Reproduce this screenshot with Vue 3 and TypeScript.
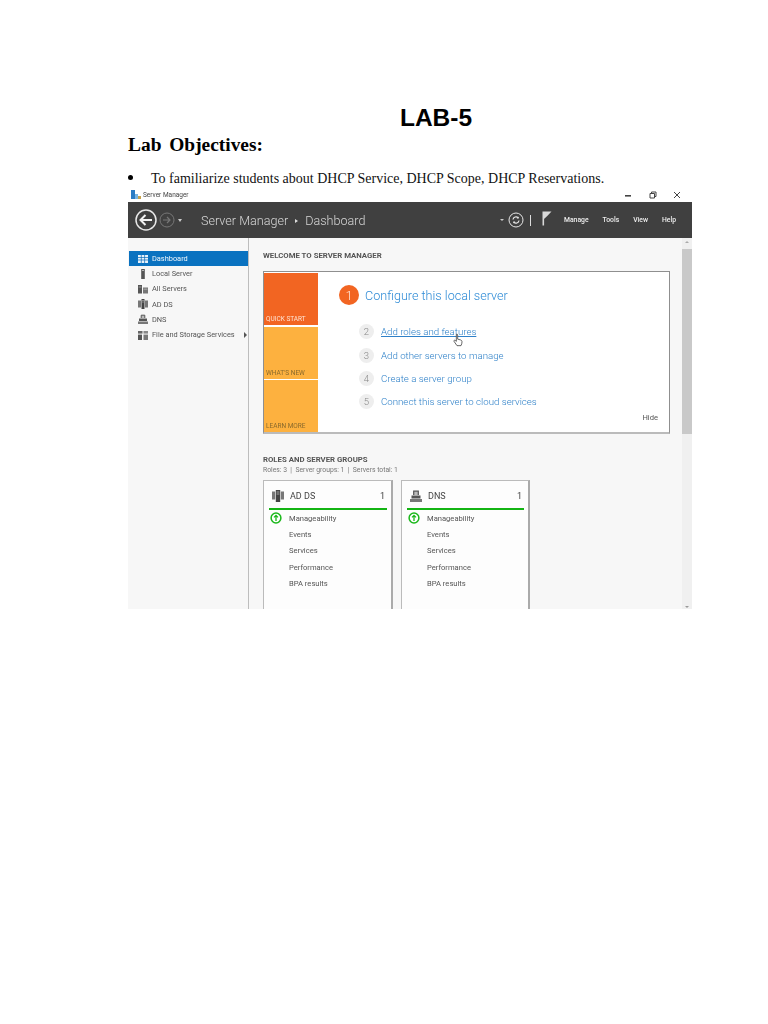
<script setup lang="ts">
const navItems = [
  { label: 'Dashboard', icon: 'dash', active: true },
  { label: 'Local Server', icon: 'local', active: false },
  { label: 'All Servers', icon: 'all', active: false },
  { label: 'AD DS', icon: 'ad', active: false },
  { label: 'DNS', icon: 'dns', active: false },
  { label: 'File and Storage Services', icon: 'file', active: false },
]
const steps = [
  { n: 2, label: 'Add roles and features', link: true },
  { n: 3, label: 'Add other servers to manage', link: false },
  { n: 4, label: 'Create a server group', link: false },
  { n: 5, label: 'Connect this server to cloud services', link: false },
]
const cards = [
  { name: 'AD DS', icon: 'ad' },
  { name: 'DNS', icon: 'dns' },
]
const rows = ['Events', 'Services', 'Performance', 'BPA results']
</script>

<template>
  <div class="page">
    <h1 class="title">LAB-5</h1>
    <h2 class="heading">Lab Objectives:</h2>
    <div class="bullet-row">
      <span class="bullet"></span>
      <span>To familiarize students about DHCP Service, DHCP Scope, DHCP Reservations.</span>
    </div>

    <div class="window">
      <div class="titlebar">
        <div class="titlebar-left">
          <svg class="app-icon" viewBox="0 0 10 10" width="10" height="10">
            <rect x="0" y="0" width="4" height="9" fill="#2b7cc4" />
            <rect x="4" y="4" width="3" height="5" fill="#7ab4e0" />
            <rect x="7" y="6" width="3" height="3" fill="#c8a24a" />
          </svg>
          <span>Server Manager</span>
        </div>
        <div class="win-controls">
          <svg viewBox="0 0 10 10" width="10" height="10"><rect x="1" y="5" width="6" height="1.6" fill="#444" /></svg>
          <svg viewBox="0 0 10 10" width="10" height="10"><path d="M2 3.5h4.5V8H2zM3.5 3.5V2H8v4.5H6.5" fill="none" stroke="#444" stroke-width="1" /></svg>
          <svg viewBox="0 0 10 10" width="10" height="10"><path d="M2 2l6 6M8 2l-6 6" stroke="#444" stroke-width="1" /></svg>
        </div>
      </div>

      <div class="topbar">
        <svg class="nav-back" viewBox="0 0 24 24" width="24" height="24">
          <circle cx="12" cy="12" r="10" fill="none" stroke="#e8e8e8" stroke-width="1.5" />
          <path d="M18 12H7M11.5 7L6.5 12l5 5" fill="none" stroke="#f2f2f2" stroke-width="2" />
        </svg>
        <svg class="nav-fwd" viewBox="0 0 16 16" width="16" height="16">
          <circle cx="8" cy="8" r="7" fill="none" stroke="#777" stroke-width="1" />
          <path d="M4 8h7M8 5l3 3-3 3" fill="none" stroke="#777" stroke-width="1.2" />
        </svg>
        <span class="caret-down"></span>
        <div class="crumb">Server Manager<span class="crumb-sep"></span>Dashboard</div>
        <div class="top-right">
          <span class="caret-small"></span>
          <svg class="refresh" viewBox="0 0 16 16" width="16" height="16">
            <circle cx="8" cy="8" r="7" fill="none" stroke="#e6e6e6" stroke-width="1" />
            <path d="M5 7.5a3 3 0 0 1 5.2-1.6M11 8.5a3 3 0 0 1-5.2 1.6" fill="none" stroke="#e6e6e6" stroke-width="1.2" />
            <path d="M10.8 4.4v2.2H8.7M5.2 11.6V9.4h2.1" fill="#e6e6e6" />
          </svg>
          <span class="pipe"></span>
          <svg class="flag" viewBox="0 0 10 15" width="10" height="15">
            <path d="M0.5 0.5h1.6v14H0.5zM2 0.5h7.5L5.5 4.8 2 8z" fill="#d8d8d8" />
          </svg>
          <nav class="menu">
            <span>Manage</span><span>Tools</span><span>View</span><span>Help</span>
          </nav>
        </div>
      </div>

      <div class="body">
        <aside class="sidebar">
          <div v-for="item in navItems" :key="item.label" class="nav-item" :class="{ active: item.active }">
            <svg class="nav-icon" viewBox="0 0 10 10" width="10" height="10">
              <template v-if="item.icon === 'dash'">
                <rect x="0" y="1" width="10" height="8" fill="#e8f2fa" />
                <path d="M0 3.5h10M0 6h10M3.3 1v8M6.6 1v8" stroke="#0a6cb8" stroke-width=".7" />
              </template>
              <template v-else-if="item.icon === 'local'">
                <rect x="3.2" y="0" width="3.6" height="10" fill="#555" />
                <rect x="4" y="1.2" width="2" height=".8" fill="#ccc" />
              </template>
              <template v-else-if="item.icon === 'all'">
                <rect x="0" y="1" width="4" height="8.5" fill="#555" />
                <rect x="5" y="3.5" width="5" height="6" fill="#777" />
                <path d="M0.6 3h2.8M5.6 5.2h3.8" stroke="#ccc" stroke-width=".6" />
              </template>
              <template v-else-if="item.icon === 'ad'">
                <rect x="0" y="1.5" width="3" height="7" fill="#777" />
                <rect x="3.5" y="0" width="3" height="10" fill="#444" />
                <rect x="7" y="1.5" width="3" height="7" fill="#777" />
                <path d="M4 1.5h2M4 3h2" stroke="#ccc" stroke-width=".5" />
              </template>
              <template v-else-if="item.icon === 'dns'">
                <path d="M3.2 4V1.2h3.6V4" fill="#bbb" stroke="#555" stroke-width="1" />
                <rect x="1" y="4.5" width="8" height="2.5" fill="#555" />
                <rect x="0" y="7.5" width="10" height="2.5" fill="#777" />
              </template>
              <template v-else>
                <rect x="0" y="1" width="4.5" height="2.6" fill="#666" />
                <rect x="5.5" y="1" width="4.5" height="2.6" fill="#888" />
                <rect x="0" y="4.6" width="4" height="5.4" fill="#555" />
                <rect x="5.5" y="4.6" width="4.5" height="5.4" fill="#777" />
              </template>
            </svg>
            <span>{{ item.label }}</span>
            <span v-if="item.icon === 'file'" class="caret-right"></span>
          </div>
        </aside>

        <main class="content">
          <div class="section-title welcome-title">WELCOME TO SERVER MANAGER</div>
          <section class="welcome">
            <div class="tiles">
              <div class="tile orange">QUICK START</div>
              <div class="tile yellow">WHAT'S NEW</div>
              <div class="tile yellow">LEARN MORE</div>
            </div>
            <div class="welcome-main">
              <div class="configure">
                <span class="num-circle">1</span>
                <span>Configure this local server</span>
              </div>
              <div v-for="s in steps" :key="s.n" class="step">
                <span class="step-num">{{ s.n }}</span>
                <span class="step-label" :class="{ link: s.link }">{{ s.label }}</span>
                <svg v-if="s.link" class="hand" viewBox="0 0 12 16" width="10" height="14">
                  <path d="M4 1.2c.8-.6 1.6 0 1.6.8v5l3.2.8c1.4.4 2 1.2 2 2.4 0 1.6-.5 3-1.2 4.6H4.8L1.2 9.6c-.5-.9.5-1.7 1.4-1.1L4 9.6V2c0-.3 0-.6 0-.8z" fill="#fff" stroke="#333" stroke-width=".9" />
                </svg>
              </div>
              <div class="hide">Hide</div>
            </div>
          </section>

          <div class="section-title roles-title">ROLES AND SERVER GROUPS</div>
          <div class="roles-sub">Roles: 3 &nbsp;|&nbsp; Server groups: 1 &nbsp;|&nbsp; Servers total: 1</div>

          <div class="cards">
            <article v-for="c in cards" :key="c.name" class="card">
              <header class="card-head">
                <svg class="card-icon" viewBox="0 0 12 12" width="12" height="12">
                  <template v-if="c.icon === 'ad'">
                    <rect x="0" y="1.5" width="3.2" height="8" fill="#777" />
                    <rect x="3.8" y="0" width="4.4" height="12" fill="#444" />
                    <rect x="8.8" y="1.5" width="3.2" height="8" fill="#777" />
                    <path d="M4.6 2h2.8M4.6 4h2.8" stroke="#ccc" stroke-width=".7" />
                  </template>
                  <template v-else>
                    <path d="M3.7 5V1.2h4.6V5" fill="#bbb" stroke="#555" stroke-width="1.2" />
                    <rect x="1.5" y="5.5" width="9" height="3" fill="#555" />
                    <rect x="0" y="9" width="12" height="3" fill="#777" />
                  </template>
                </svg>
                <span class="card-name">{{ c.name }}</span>
                <span class="card-count">1</span>
              </header>
              <div class="card-rule"></div>
              <div class="card-row first">
                <svg class="status" viewBox="0 0 12 12" width="12" height="12">
                  <circle cx="6" cy="6" r="4.9" fill="#fff" stroke="#1bb81b" stroke-width="1.5" />
                  <path d="M6 9V3.6M4 5.4L6 3.4l2 2" fill="none" stroke="#1bb81b" stroke-width="1.3" />
                </svg>
                <span>Manageability</span>
              </div>
              <div v-for="r in rows" :key="r" class="card-row">{{ r }}</div>
            </article>
          </div>
        </main>

        <div class="scrollbar">
          <span class="scroll-up"></span>
          <div class="thumb"></div>
          <span class="scroll-down"></span>
        </div>
      </div>
    </div>
  </div>
</template>

<style scoped>
.page {
  width: 768px;
  height: 1024px;
  box-sizing: border-box;
  padding: 104px 76px 0 128px;
  background: #fff;
  color: #000;
  font-family: "Liberation Serif", serif;
  overflow: hidden;
}
.title {
  margin: 0;
  text-align: center;
  width: 616px;
  font: bold 24.5px/28px "Liberation Sans", sans-serif;
}
.heading {
  margin: 1px 0 0;
  font: bold 19.4px/24px "Liberation Serif", serif;
  word-spacing: 3px;
}
.bullet-row {
  display: flex;
  align-items: center;
  margin-top: 13px;
  height: 17px;
  font-size: 14px;
  line-height: 17px;
  color: #111;
  white-space: nowrap;
}
.bullet {
  width: 5px;
  height: 5px;
  border-radius: 50%;
  background: #000;
  margin: 0 18px 2px 0;
}
.window {
  width: 564px;
  height: 422px;
  display: flex;
  flex-direction: column;
  background: #fff;
  font-family: Roboto, "Liberation Sans", sans-serif;
  filter: blur(0.4px);
  overflow: hidden;
}
.titlebar {
  height: 15px;
  box-sizing: border-box;
  padding: 1px 10px 0 3px;
  flex: none;
  display: flex;
  align-items: center;
  justify-content: space-between;
  font-size: 6.5px;
  color: #444;
}
.titlebar-left {
  display: flex;
  align-items: center;
  gap: 2px;
}
.win-controls {
  display: flex;
  gap: 14px;
}
.topbar {
  height: 36px;
  flex: none;
  display: flex;
  align-items: center;
  padding-left: 6px;
  background: #404040;
  color: #ddd;
}
.nav-back {
  margin-right: 1px;
}
.caret-down {
  width: 0;
  height: 0;
  margin-left: 3px;
  border-left: 2.5px solid transparent;
  border-right: 2.5px solid transparent;
  border-top: 3px solid #ccc;
}
.crumb {
  margin-left: 19px;
  font-size: 12.6px;
  font-weight: 300;
  color: #d6d6d6;
  white-space: nowrap;
}
.crumb-sep {
  display: inline-block;
  width: 0;
  height: 0;
  margin: 0 7px 2px 7px;
  border-top: 2.5px solid transparent;
  border-bottom: 2.5px solid transparent;
  border-left: 3px solid #ddd;
}
.top-right {
  margin-left: auto;
  display: flex;
  align-items: center;
}
.caret-small {
  width: 0;
  height: 0;
  margin-right: 4px;
  border-left: 2px solid transparent;
  border-right: 2px solid transparent;
  border-top: 2.5px solid #ccc;
}
.pipe {
  width: 1px;
  height: 11px;
  margin: 0 11px 0 6px;
  background: #ddd;
}
.flag {
  margin-bottom: 3px;
}
.menu {
  display: flex;
  gap: 14px;
  margin-left: 11.5px;
  padding-right: 16px;
  font-size: 6.8px;
  font-weight: 500;
  color: #eee;
}
.body {
  flex: 1;
  min-height: 0;
  display: flex;
  background: #f7f7f7;
}
.sidebar {
  width: 119px;
  flex: none;
  margin-left: 1px;
  padding-top: 13px;
  border-right: 1px solid #bdbdbd;
  font-size: 7.4px;
  color: #555;
  background: #f7f7f7;
}
.nav-item {
  height: 15.2px;
  display: flex;
  align-items: center;
  padding-left: 9px;
  gap: 4px;
  white-space: nowrap;
}
.nav-icon {
  flex: none;
}
.nav-item.active {
  background: #0a72c0;
  color: #eef6fc;
}
.caret-right {
  flex: none;
  width: 0;
  height: 0;
  margin-left: 5px;
  border-top: 3px solid transparent;
  border-bottom: 3px solid transparent;
  border-left: 3px solid #555;
}
.content {
  flex: 1;
  min-width: 0;
  padding: 12px 0 0 14px;
  color: #555;
}
.section-title {
  font-size: 7.8px;
  font-weight: 700;
  color: #555;
  white-space: nowrap;
}
.welcome-title {
  line-height: 12px;
}
.welcome {
  width: 407px;
  height: 163px;
  box-sizing: border-box;
  margin-top: 9px;
  display: flex;
  background: #fff;
  border: 1px solid #8f8f8f;
  border-bottom: 2px solid #bbb;
}
.tiles {
  width: 54px;
  flex: none;
  display: flex;
  flex-direction: column;
  gap: 1.5px;
  padding-top: 1px;
}
.tile {
  flex: 1;
  display: flex;
  align-items: flex-end;
  padding: 0 0 2px 2px;
  font-size: 6.5px;
  white-space: nowrap;
}
.orange {
  background: #f26522;
  color: #ffe3d2;
}
.yellow {
  background: #fdb13f;
  color: #8a6a2c;
}
.welcome-main {
  flex: 1;
  position: relative;
  padding: 12px 0 0 21px;
}
.configure {
  display: flex;
  align-items: center;
  gap: 6px;
  height: 22px;
  margin-bottom: 14px;
  font-size: 12.6px;
  font-weight: 300;
  color: #2e8bd6;
  white-space: nowrap;
}
.num-circle {
  width: 20px;
  height: 20px;
  border-radius: 50%;
  background: #f26522;
  color: #ffe9dc;
  font-size: 13px;
  display: flex;
  align-items: center;
  justify-content: center;
}
.step {
  position: relative;
  display: flex;
  align-items: center;
  height: 23.4px;
  margin-left: 20px;
  gap: 7px;
  font-size: 9.7px;
  font-weight: 300;
  color: #2e80c8;
  white-space: nowrap;
}
.step-num {
  width: 15px;
  height: 15px;
  border-radius: 50%;
  background: #eee;
  color: #888;
  font-size: 9.5px;
  display: flex;
  align-items: center;
  justify-content: center;
}
.step-label.link {
  text-decoration: underline;
}
.hand {
  position: absolute;
  left: 94px;
  top: 13px;
}
.hide {
  position: absolute;
  right: 11px;
  bottom: 10px;
  font-size: 7.6px;
  color: #555;
}
.roles-title {
  margin-top: 21px;
  line-height: 10px;
}
.roles-sub {
  font-size: 6.8px;
  line-height: 10px;
  color: #777;
  white-space: nowrap;
}
.cards {
  display: flex;
  gap: 8px;
  margin-top: 5px;
}
.card {
  width: 130px;
  height: 140px;
  box-sizing: border-box;
  padding: 8px 4px 0 5px;
  background: #fdfdfd;
  border: 1px solid #bbb;
  border-right: 2px solid #aaa;
  border-bottom: none;
}
.card + .card {
  width: 129px;
}
.card-head {
  display: flex;
  align-items: center;
  height: 14px;
  padding: 0 2px 0 3px;
  font-size: 9px;
  color: #444;
}
.card-name {
  margin-left: 6px;
}
.card-count {
  margin-left: auto;
}
.card-rule {
  height: 2px;
  margin-top: 5px;
  background: #13b413;
}
.card-row {
  display: flex;
  align-items: center;
  height: 16.3px;
  padding-left: 20px;
  font-size: 7.6px;
  color: #555;
}
.card-row.first {
  position: relative;
}
.status {
  position: absolute;
  left: 1px;
  top: 2px;
}
.scrollbar {
  width: 10px;
  flex: none;
  margin-left: auto;
  background: #f0f0f0;
  display: flex;
  flex-direction: column;
  align-items: center;
}
.thumb {
  width: 100%;
  height: 185px;
  margin-top: 6px;
  background: #c9c9c9;
}
.scroll-up {
  width: 0;
  height: 0;
  margin-top: 3px;
  border-left: 2px solid transparent;
  border-right: 2px solid transparent;
  border-bottom: 2px solid #aaa;
}
.scroll-down {
  width: 0;
  height: 0;
  margin-top: auto;
  margin-bottom: 1px;
  border-left: 2px solid transparent;
  border-right: 2px solid transparent;
  border-top: 2px solid #999;
}
</style>
